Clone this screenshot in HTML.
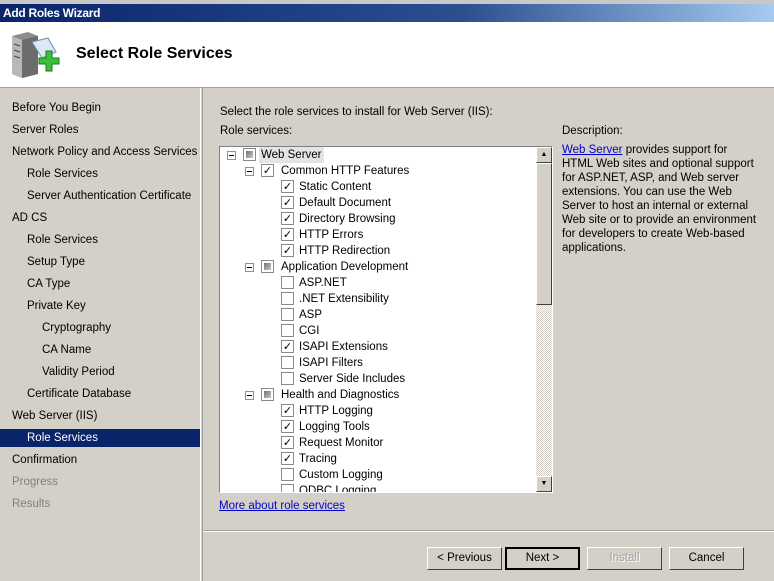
<!DOCTYPE html>
<html><head><meta charset="utf-8"><style>
*{margin:0;padding:0;box-sizing:border-box}
body{width:774px;height:581px;overflow:hidden;background:#d4d0c8;font-family:"Liberation Sans",sans-serif;font-size:11.5px;color:#000;position:relative}
.a{position:absolute;white-space:nowrap}
#top{left:0;top:0;width:774px;height:4px;background:#c8c8c8}
#title{left:0;top:4px;width:774px;height:18px;background:linear-gradient(90deg,#0a246a,#2a5090 60%,#a6caf0);color:#fff;font-weight:bold;font-size:12px;padding:2px 3px;letter-spacing:-0.3px}
#hdr{left:0;top:22px;width:774px;height:66px;background:#fff;border-bottom:1px solid #a0a0a0}
#h1{left:76px;top:45px;font-size:16px;font-weight:bold}
.nav{position:absolute;left:12px;height:18px;line-height:18px;margin-top:1px}
.sel{left:0;width:200px;background:#0a246a;color:#fff;margin-top:0}
.dim{color:#808080}
#vsep{left:200px;top:88px;width:3px;height:493px;border-left:1px solid #fff;border-right:1px solid #a0a0a0}
#tree{left:219px;top:146px;width:334px;height:347px;background:#fff;border:1px solid #808080;border-right-color:#fff;border-bottom-color:#fff;overflow:hidden}
.r{position:absolute;height:16px;line-height:17px}
.cb{position:absolute;width:13px;height:13px;border:1px solid #8a8a8a;background:#fff;font-size:11px;line-height:11px;text-align:center;font-weight:bold;font-family:"DejaVu Sans",sans-serif}
.ex{position:absolute;width:9px;height:9px;border:1px solid #909090;background:#fff}
.ex:after{content:"";position:absolute;left:1px;top:3px;width:5px;height:1px;background:#000}
.ind{background:#fff}
.ind:after{content:"";position:absolute;left:2px;top:2px;width:7px;height:7px;background:linear-gradient(135deg,#707070,#c8c8c8)}
#sb{left:536px;top:147px;width:16px;height:345px;background:repeating-conic-gradient(#d4d0c8 0 25%,#fff 0 50%) 0 0/2px 2px}
.sbb{position:absolute;left:0;width:16px;height:16px;background:#d4d0c8;border:1px solid;border-color:#fff #404040 #404040 #fff;font-size:7px;text-align:center;line-height:14px}
.btn{position:absolute;top:547px;width:75px;height:23px;background:#d4d0c8;border:1px solid;border-color:#fff #404040 #404040 #fff;text-align:center;line-height:21px}
a{color:#0000cc;text-decoration:underline}
</style></head><body>
<div class="a" id="top"></div>
<div class="a" id="title">Add Roles Wizard</div>
<div class="a" id="hdr"></div>
<svg class="a" style="left:8px;top:28px" width="52" height="52" viewBox="0 0 52 52">
<path d="M4 8 L20 4 L30 8 L30 46 L14 50 L4 46Z" fill="#8c8c8c"/>
<path d="M4 8 L14 12 L14 50 L4 46Z" fill="#b8b8b8"/>
<path d="M14 12 L30 8 L30 46 L14 50Z" fill="#6c6c6c"/>
<g stroke="#444" stroke-width="1"><line x1="6" y1="16" x2="12" y2="18"/><line x1="6" y1="22" x2="12" y2="24"/><line x1="6" y1="28" x2="12" y2="30"/></g>
<path d="M24 14 L40 10 L48 24 L34 30Z" fill="#dde8f4" stroke="#7090b0"/>
<path d="M31 30 h7 v-7 h6 v7 h7 v6 h-7 v7 h-6 v-7 h-7z" fill="#3cc03c" stroke="#1a7a1a"/>
</svg>
<div class="a" id="h1">Select Role Services</div>

<div class="nav" style="top:98px">Before You Begin</div>
<div class="nav" style="top:120px">Server Roles</div>
<div class="nav" style="top:142px">Network Policy and Access Services</div>
<div class="nav" style="top:164px;left:27px">Role Services</div>
<div class="nav" style="top:186px;left:27px">Server Authentication Certificate</div>
<div class="nav" style="top:208px">AD CS</div>
<div class="nav" style="top:230px;left:27px">Role Services</div>
<div class="nav" style="top:252px;left:27px">Setup Type</div>
<div class="nav" style="top:274px;left:27px">CA Type</div>
<div class="nav" style="top:296px;left:27px">Private Key</div>
<div class="nav" style="top:318px;left:42px">Cryptography</div>
<div class="nav" style="top:340px;left:42px">CA Name</div>
<div class="nav" style="top:362px;left:42px">Validity Period</div>
<div class="nav" style="top:384px;left:27px">Certificate Database</div>
<div class="nav" style="top:406px">Web Server (IIS)</div>
<div class="nav sel" style="top:429px;padding-left:27px">Role Services</div>
<div class="nav" style="top:450px">Confirmation</div>
<div class="nav dim" style="top:472px">Progress</div>
<div class="nav dim" style="top:494px">Results</div>
<div class="a" id="vsep"></div>

<div class="a" style="left:220px;top:106px">Select the role services to install for Web Server (IIS):</div>
<div class="a" style="left:220px;top:125px">Role services:</div>
<div class="a" style="left:562px;top:125px">Description:</div>
<div class="a" style="left:562px;top:143px;line-height:14px"><a>Web Server</a> provides support for<br>HTML Web sites and optional support<br>for ASP.NET, ASP, and Web server<br>extensions. You can use the Web<br>Server to host an internal or external<br>Web site or to provide an environment<br>for developers to create Web-based<br>applications.</div>

<div class="a" id="tree">
<div class="ex" style="left:7px;top:4px"></div><div class="cb ind" style="left:23px;top:1px"></div><div class="r" style="left:39px;top:0;background:#e4e4e4;padding:0 2px">Web Server</div>
<div class="ex" style="left:25px;top:20px"></div><div class="cb" style="left:41px;top:17px">✓</div><div class="r" style="left:61px;top:16px">Common HTTP Features</div>
<div class="cb" style="left:61px;top:33px">✓</div><div class="r" style="left:79px;top:32px">Static Content</div>
<div class="cb" style="left:61px;top:49px">✓</div><div class="r" style="left:79px;top:48px">Default Document</div>
<div class="cb" style="left:61px;top:65px">✓</div><div class="r" style="left:79px;top:64px">Directory Browsing</div>
<div class="cb" style="left:61px;top:81px">✓</div><div class="r" style="left:79px;top:80px">HTTP Errors</div>
<div class="cb" style="left:61px;top:97px">✓</div><div class="r" style="left:79px;top:96px">HTTP Redirection</div>
<div class="ex" style="left:25px;top:116px"></div><div class="cb ind" style="left:41px;top:113px"></div><div class="r" style="left:61px;top:112px">Application Development</div>
<div class="cb" style="left:61px;top:129px"></div><div class="r" style="left:79px;top:128px">ASP.NET</div>
<div class="cb" style="left:61px;top:145px"></div><div class="r" style="left:79px;top:144px">.NET Extensibility</div>
<div class="cb" style="left:61px;top:161px"></div><div class="r" style="left:79px;top:160px">ASP</div>
<div class="cb" style="left:61px;top:177px"></div><div class="r" style="left:79px;top:176px">CGI</div>
<div class="cb" style="left:61px;top:193px">✓</div><div class="r" style="left:79px;top:192px">ISAPI Extensions</div>
<div class="cb" style="left:61px;top:209px"></div><div class="r" style="left:79px;top:208px">ISAPI Filters</div>
<div class="cb" style="left:61px;top:225px"></div><div class="r" style="left:79px;top:224px">Server Side Includes</div>
<div class="ex" style="left:25px;top:244px"></div><div class="cb ind" style="left:41px;top:241px"></div><div class="r" style="left:61px;top:240px">Health and Diagnostics</div>
<div class="cb" style="left:61px;top:257px">✓</div><div class="r" style="left:79px;top:256px">HTTP Logging</div>
<div class="cb" style="left:61px;top:273px">✓</div><div class="r" style="left:79px;top:272px">Logging Tools</div>
<div class="cb" style="left:61px;top:289px">✓</div><div class="r" style="left:79px;top:288px">Request Monitor</div>
<div class="cb" style="left:61px;top:305px">✓</div><div class="r" style="left:79px;top:304px">Tracing</div>
<div class="cb" style="left:61px;top:321px"></div><div class="r" style="left:79px;top:320px">Custom Logging</div>
<div class="cb" style="left:61px;top:337px"></div><div class="r" style="left:79px;top:336px">ODBC Logging</div>
</div>
<div class="a" id="sb">
<div class="sbb" style="top:0">▲</div>
<div class="sbb" style="top:16px;height:142px"></div>
<div class="sbb" style="top:329px">▼</div>
</div>
<div class="a" style="left:219px;top:500px"><a>More about role services</a></div>

<div class="a" style="left:203px;top:530px;width:571px;height:2px;border-top:1px solid #a0a0a0;border-bottom:1px solid #fff"></div>
<div class="btn" style="left:427px">&lt; Previous</div>
<div class="btn" style="left:505px;border:2px solid #000;line-height:19px">Next &gt;</div>
<div class="btn" style="left:587px;color:#a0a0a0;text-shadow:1px 1px #fff">Install</div>
<div class="btn" style="left:669px">Cancel</div>
</body></html>
